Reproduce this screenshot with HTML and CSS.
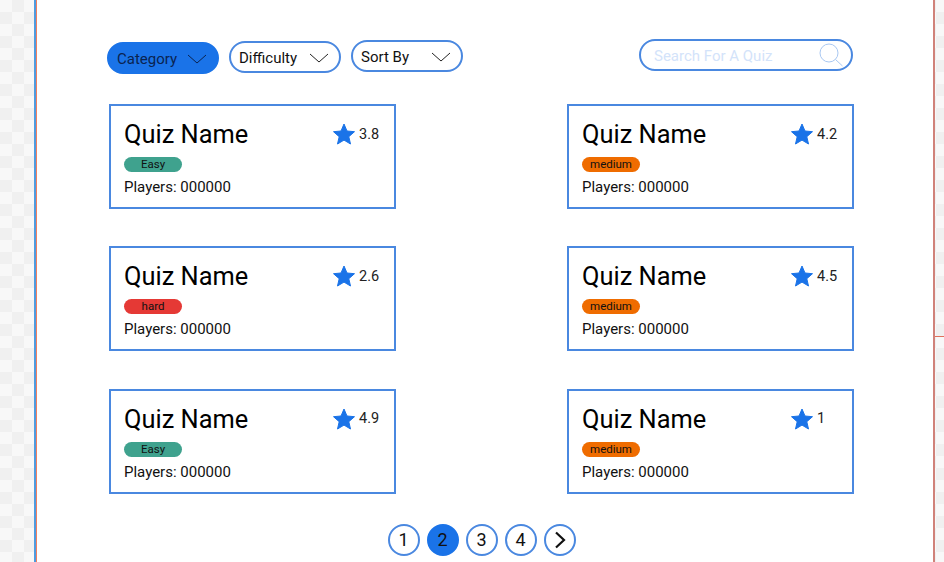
FILE: index.html
```html
<!DOCTYPE html>
<html lang="en">
<head>
    <meta charset="UTF-8">
    <title>Quiz List</title>
    <link rel="stylesheet" href="styles.css">
</head>
<body>
    <main class="frame">
        <section class="filters">
            <button class="pill pill-active">Category <svg class="chev" viewBox="0 0 20 10"><path d="M1 1l9 8 9-8"/></svg></button>
            <button class="pill pill-mid">Difficulty <svg class="chev" viewBox="0 0 20 10"><path d="M1 1l9 8 9-8"/></svg></button>
            <button class="pill pill-top">Sort By <svg class="chev" viewBox="0 0 20 10"><path d="M1 1l9 8 9-8"/></svg></button>
            <div class="search">
                <span>Search For A Quiz</span>
                <svg class="search-icon" viewBox="0 0 24 24"><circle cx="10" cy="10" r="9"/><path d="M16.5 16.5l7 6.500"/></svg>
            </div>
        </section>

        <section class="quiz-grid">
            <article class="card">
                <div class="card-top"><h2>Quiz Name</h2><div class="rating"><svg class="star" viewBox="0 0 24 24"><path d="M12 2l3 7 7.500.7-5.700 5 1.700 7.300-6.500-3.900-6.500 3.900 1.700-7.300-5.700-5 7.500-.7z"/></svg><span>3.8</span></div></div>
                <div class="tag tag-easy">Easy</div>
                <p>Players: 000000</p>
            </article>
            <article class="card">
                <div class="card-top"><h2>Quiz Name</h2><div class="rating"><svg class="star" viewBox="0 0 24 24"><path d="M12 2l3 7 7.500.7-5.700 5 1.700 7.300-6.500-3.900-6.500 3.900 1.700-7.300-5.700-5 7.500-.7z"/></svg><span>4.2</span></div></div>
                <div class="tag tag-medium">medium</div>
                <p>Players: 000000</p>
            </article>
            <article class="card">
                <div class="card-top"><h2>Quiz Name</h2><div class="rating"><svg class="star" viewBox="0 0 24 24"><path d="M12 2l3 7 7.500.7-5.700 5 1.700 7.300-6.500-3.900-6.500 3.900 1.700-7.300-5.700-5 7.500-.7z"/></svg><span>2.6</span></div></div>
                <div class="tag tag-hard">hard</div>
                <p>Players: 000000</p>
            </article>
            <article class="card">
                <div class="card-top"><h2>Quiz Name</h2><div class="rating"><svg class="star" viewBox="0 0 24 24"><path d="M12 2l3 7 7.500.7-5.700 5 1.700 7.300-6.500-3.900-6.500 3.900 1.700-7.300-5.700-5 7.500-.7z"/></svg><span>4.5</span></div></div>
                <div class="tag tag-medium">medium</div>
                <p>Players: 000000</p>
            </article>
            <article class="card">
                <div class="card-top"><h2>Quiz Name</h2><div class="rating"><svg class="star" viewBox="0 0 24 24"><path d="M12 2l3 7 7.500.7-5.700 5 1.700 7.300-6.500-3.900-6.500 3.900 1.700-7.300-5.700-5 7.500-.7z"/></svg><span>4.9</span></div></div>
                <div class="tag tag-easy">Easy</div>
                <p>Players: 000000</p>
            </article>
            <article class="card">
                <div class="card-top"><h2>Quiz Name</h2><div class="rating"><svg class="star" viewBox="0 0 24 24"><path d="M12 2l3 7 7.500.7-5.700 5 1.700 7.300-6.500-3.900-6.500 3.900 1.700-7.300-5.700-5 7.500-.7z"/></svg><span>1</span></div></div>
                <div class="tag tag-medium">medium</div>
                <p>Players: 000000</p>
            </article>
        </section>

        <nav class="pages">
            <a class="page">1</a>
            <a class="page page-active">2</a>
            <a class="page">3</a>
            <a class="page">4</a>
            <a class="page"><svg class="next" viewBox="0 0 12 18"><path d="M2 1.500l8 7.500-8 7.500"/></svg></a>
        </nav>
    </main>
    <div class="guide"></div>
</body>
</html>
```

FILE: styles.css
```css
*{
    box-sizing: border-box;
    margin: 0;
    padding: 0;
    font-family: Roboto, "Liberation Sans", sans-serif;
}
html, body{
    height: 100%;
    overflow: hidden;
}
body{
    padding-left: 34px;
    background-color: #f8f8f8;
    background-image: conic-gradient(#f0f0f0 25%, transparent 0 50%, #f0f0f0 0 75%, transparent 0);
    background-size: 24px 24px;
}

.frame{
    width: 901px;
    height: 562px;
    padding: 39px 79px 0 71px;
    background: white;
    border-left: 2px solid #4f9be0;
    border-right: 2px solid #d0827a;
    box-shadow: inset 1px 0 0 #f07f5f;
}

.filters{
    display: flex;
    align-items: flex-start;
    gap: 10px;
    height: 65px;
}
.pill{
    display: flex;
    align-items: center;
    justify-content: space-between;
    width: 112px;
    height: 32px;
    padding: 2px 10px 0 8px;
    border: 2px solid #4a88e0;
    border-radius: 16px;
    background: white;
    color: #111;
    font-size: 15px;
}
.pill-active{
    margin-top: 3px;
    background: #1a73e8;
    border-color: #1a73e8;
    color: #0a2350;
}
.pill-mid{
    margin-top: 2px;
}
.pill-top{
    margin-top: 1px;
}
.chev{
    width: 20px;
    height: 10px;
    fill: none;
    stroke: #222;
    stroke-width: 1;
}
.pill-active .chev{
    stroke: #0a2350;
}

.search{
    display: flex;
    align-items: center;
    justify-content: space-between;
    width: 214px;
    height: 32px;
    margin-left: auto;
    margin-right: 1px;
    padding: 0 8px 0 13px;
    border: 2px solid #4a88e0;
    border-radius: 16px;
    color: #d3e3fa;
    font-size: 15px;
}
.search span{
    padding-top: 2px;
}
.search-icon{
    width: 24px;
    height: 24px;
    fill: none;
    stroke: #a9c8f2;
    stroke-width: 1;
}

.quiz-grid{
    display: grid;
    grid-template-columns: 287px 287px;
    justify-content: space-between;
    row-gap: 37.4px;
    margin-left: 2px;
}
.card{
    height: 105px;
    padding: 12px 15px 0 13px;
    border: 2px solid #4a88e0;
    background: white;
}
.card p{
    margin-top: 7px;
    font-size: 15px;
    line-height: 17px;
    color: #111;
}
.card-top{
    display: flex;
    justify-content: space-between;
    align-items: center;
    height: 32px;
}
.card-top h2{
    font-size: 25.400px;
    font-weight: 400;
    color: #000;
}
.rating{
    display: flex;
    align-items: center;
    gap: 3px;
    width: 47px;
    font-size: 14.500px;
    color: #222;
}
.star{
    width: 24px;
    height: 24px;
    flex: none;
    fill: #1a73e8;
    stroke: #1a73e8;
    stroke-linejoin: round;
}

.tag{
    width: 58px;
    height: 15px;
    margin-top: 7px;
    border-radius: 8px;
    text-align: center;
    font-size: 11.500px;
    line-height: 15px;
    color: #111;
}
.tag-easy{
    background: #3fa28e;
}
.tag-medium{
    background: #ef6c00;
}
.tag-hard{
    background: #e53935;
}

.pages{
    display: flex;
    justify-content: center;
    gap: 7px;
    margin-top: 30px;
    margin-left: 2px;
}
.page{
    display: flex;
    align-items: center;
    justify-content: center;
    width: 32px;
    height: 32px;
    border: 2px solid #4a88e0;
    border-radius: 50%;
    font-size: 18px;
    color: #111;
}
.page-active{
    background: #1a73e8;
    border-color: #1a73e8;
}
.next{
    width: 12px;
    height: 18px;
    fill: none;
    stroke: #111;
    stroke-width: 2.200;
}

/* stray selection line on the right of the canvas */
.guide{
    position: absolute;
    top: 336px;
    left: 935px;
    width: 9px;
    height: 1px;
    background: #e0705c;
}
```
